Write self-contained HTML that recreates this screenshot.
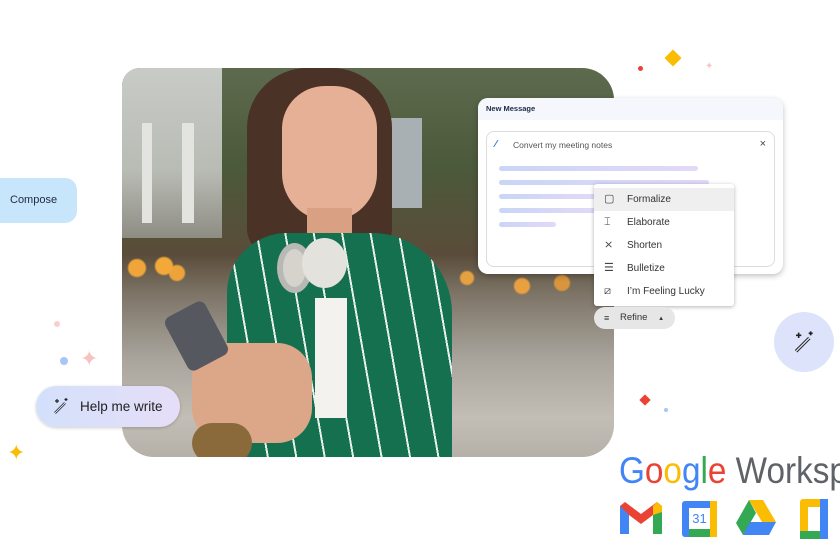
<!DOCTYPE html>
<html><head><meta charset="utf-8"><style>
*{margin:0;padding:0;box-sizing:border-box}
body{width:840px;height:560px;overflow:hidden;background:#fff;font-family:"Liberation Sans",Arial,sans-serif;position:relative}
.abs{position:absolute}
.photo{left:122px;top:68px;width:492px;height:389px;border-radius:18px 32px 32px 32px;overflow:hidden;
background:
radial-gradient(circle at 15px 200px,#f0a53a 0 8px,transparent 10px),
radial-gradient(circle at 42px 198px,#f2a93a 0 8px,transparent 10px),
radial-gradient(circle at 55px 205px,#eda33a 0 7px,transparent 9px),
radial-gradient(circle at 345px 210px,#e5a040 0 6px,transparent 8px),
radial-gradient(circle at 400px 218px,#e9a040 0 7px,transparent 9px),
radial-gradient(circle at 440px 215px,#d8953c 0 7px,transparent 9px),
linear-gradient(180deg,#5e6a4e 0,#4b5a3a 25%,#5a4c3a 48%,#7d7466 58%,#a9a59d 75%,#c2beb6 90%,#b5b1a9 100%);}
.card{left:478px;top:98px;width:305px;height:176px;background:#fff;border-radius:10px;box-shadow:0 2px 6px rgba(0,0,0,.25)}
.menu{left:594px;top:184px;width:140px;height:122px;background:#fff;box-shadow:0 1px 4px rgba(0,0,0,.3);border-radius:3px;font-size:10px;color:#333}
.menu div{height:23px;line-height:23px;padding-left:33px;position:relative}
.menu span{position:absolute;left:10px;top:0;font-size:11px;color:#444}
.line{height:5px;border-radius:3px;background:linear-gradient(90deg,#c9d6f6,#e3d8f8)}
</style></head><body>
<div class="abs photo">
  <div class="abs" style="left:0;top:0;width:100px;height:170px;background:linear-gradient(180deg,#c8cbc6,#b9bcb5 60%,#8e8d84)"></div>
  <div class="abs" style="left:20px;top:55px;width:10px;height:100px;background:#e3e4df"></div>
  <div class="abs" style="left:60px;top:55px;width:12px;height:100px;background:#e3e4df"></div>
  <div class="abs" style="left:255px;top:50px;width:45px;height:90px;background:#a9b0b4"></div>
  <div class="abs" style="left:125px;top:0;width:145px;height:190px;border-radius:60px 60px 30px 30px;background:#4a3226"></div>
  <div class="abs" style="left:160px;top:18px;width:95px;height:135px;border-radius:45px 45px 50px 50px;background:#e6b096"></div>
  <div class="abs" style="left:185px;top:140px;width:45px;height:50px;background:#d9a083"></div>
  <div class="abs" style="left:105px;top:165px;width:225px;height:240px;border-radius:60px 80px 0 0;background:repeating-linear-gradient(80deg,#14704f 0 14px,#e6efe9 14px 16px,#14704f 16px 28px)"></div>
  <div class="abs" style="left:193px;top:230px;width:32px;height:120px;background:#f4f2ee"></div>
  <div class="abs" style="left:155px;top:175px;width:35px;height:50px;border-radius:50%;background:#d5d3cb;border:6px solid #b8b9b5"></div>
  <div class="abs" style="left:180px;top:170px;width:45px;height:50px;border-radius:50%;background:#e4e2dc"></div>
  <div class="abs" style="left:70px;top:275px;width:120px;height:100px;border-radius:35px;background:#dca688"></div>
  <div class="abs" style="left:52px;top:238px;width:45px;height:60px;border-radius:7px;background:#55585f;transform:rotate(-28deg)"></div>
  <div class="abs" style="left:70px;top:355px;width:60px;height:40px;border-radius:20px;background:#8a6a3a"></div>
</div>
<div class="abs card">
  <div style="height:22px;background:#f5f7fc;border-radius:10px 10px 0 0;font-size:7.5px;font-weight:bold;color:#1f2a44;padding:6px 0 0 8px">New Message</div>
  <div class="abs" style="left:8px;top:33px;width:289px;height:136px;border:1px solid #dcdcdc;border-radius:8px">
    <div class="abs" style="left:8px;top:7px;font-size:10px;color:#2a62d8;font-weight:bold">⁄</div>
    <div class="abs" style="left:26px;top:8px;font-size:8.5px;color:#555">Convert my meeting notes</div>
    <div class="abs" style="right:8px;top:6px;font-size:11px;color:#444">×</div>
    <div class="abs line" style="left:12px;top:34px;width:199px"></div>
    <div class="abs line" style="left:12px;top:48px;width:210px"></div>
    <div class="abs line" style="left:12px;top:62px;width:100px"></div>
    <div class="abs line" style="left:12px;top:76px;width:100px"></div>
    <div class="abs line" style="left:12px;top:90px;width:57px"></div>
  </div>
</div>
<div class="abs menu">
  <div style="margin-top:4px;background:#efefef"><span>▢</span>Formalize</div>
  <div><span>⌶</span>Elaborate</div>
  <div><span>⨯</span>Shorten</div>
  <div><span>☰</span>Bulletize</div>
  <div><span>⧄</span>I’m Feeling Lucky</div>
</div>
<div class="abs" style="left:594px;top:307px;width:81px;height:22px;border-radius:11px;background:#e6e6e6;font-size:9.5px;color:#333;line-height:22px;padding-left:26px">Refine <span style="font-size:6px;margin-left:8px">▲</span><span class="abs" style="left:10px;top:0;font-size:9px">≡</span></div>
<div class="abs" style="left:0;top:178px;width:77px;height:45px;background:#c8e6fb;border-radius:0 12px 12px 0;font-size:11px;color:#1f2a44;line-height:45px;padding-left:10px">Compose</div>
<div class="abs" style="left:36px;top:386px;width:144px;height:41px;border-radius:21px;background:linear-gradient(90deg,#d3e0fb,#e6def8);box-shadow:0 1px 3px rgba(0,0,0,.2);font-size:13.5px;color:#1f1f1f;line-height:41px;padding-left:44px">Help me write
  <svg class="abs" style="left:16px;top:11px" width="18" height="18" viewBox="0 0 18 18"><path d="M3 16 L13 6" stroke="#222" stroke-width="2.5"/><path d="M3 16 L13 6" stroke="#d9e0fa" stroke-width="1"/><path d="M5 2v4M3 4h4M14 1v3M12.5 2.5h3" stroke="#222" stroke-width="1.2"/></svg></div>
<div class="abs" style="left:774px;top:312px;width:60px;height:60px;border-radius:50%;background:#dde3fa">
  <svg class="abs" style="left:18px;top:18px" width="24" height="24" viewBox="0 0 18 18"><path d="M3 16 L13 6" stroke="#222" stroke-width="2.5"/><path d="M3 16 L13 6" stroke="#dde3fa" stroke-width="1"/><path d="M5 2v4M3 4h4M14 1v3M12.5 2.5h3" stroke="#222" stroke-width="1.2"/></svg></div>
<div class="abs" style="left:667px;top:52px;width:12px;height:12px;background:#fbbc04;transform:rotate(45deg)"></div>
<div class="abs" style="left:638px;top:66px;width:5px;height:5px;border-radius:50%;background:#ea4335"></div>
<div class="abs" style="left:705px;top:61px;color:#f6c8c4;font-size:10px">✦</div>
<div class="abs" style="left:54px;top:321px;width:6px;height:6px;border-radius:50%;background:#f8cfcb"></div>
<div class="abs" style="left:60px;top:357px;width:8px;height:8px;border-radius:50%;background:#a8c4f8"></div>
<div class="abs" style="left:80px;top:346px;color:#f6c4c0;font-size:22px">✦</div>
<div class="abs" style="left:7px;top:440px;color:#fbbc04;font-size:22px">✦</div>
<div class="abs" style="left:641px;top:396px;width:8px;height:8px;background:#ea4335;transform:rotate(45deg)"></div>
<div class="abs" style="left:664px;top:408px;width:4px;height:4px;border-radius:50%;background:#a8c4f8"></div>
<div class="abs" style="left:619px;top:450px;font-size:37px;white-space:nowrap;transform:scaleX(0.9);transform-origin:left top"><span style="color:#4285f4">G</span><span style="color:#ea4335">o</span><span style="color:#fbbc04">o</span><span style="color:#4285f4">g</span><span style="color:#34a853">l</span><span style="color:#ea4335">e</span> <span style="color:#5f6368">Worksp</span></div>
<svg class="abs" style="left:620px;top:502px" width="42" height="32" viewBox="0 0 42 32"><path d="M0 4v28h9V13l12 9 12-9v19h9V4l-5-4-16 12L5 0z" fill="#ea4335"/><path d="M0 4v28h9V13z" fill="#4285f4"/><path d="M33 13v19h9V4z" fill="#34a853"/><path d="M37 0l5 4v6l-9 3V4z" fill="#fbbc04"/></svg>
<div class="abs" style="left:682px;top:501px;width:35px;height:36px;background:#4285f4;border-radius:3px"><div class="abs" style="left:7px;top:7px;width:21px;height:21px;background:#fff;font-size:13px;color:#4285f4;text-align:center;line-height:21px">31</div><div class="abs" style="left:28px;top:0;width:7px;height:36px;background:#fbbc04"></div><div class="abs" style="left:7px;top:28px;width:21px;height:8px;background:#34a853"></div></div>
<svg class="abs" style="left:736px;top:500px" width="40" height="36" viewBox="0 0 40 36"><path d="M13 0h14l13 22h-14z" fill="#fbbc04"/><path d="M13 0L0 23l7 12 13-22z" fill="#34a853"/><path d="M7 35h26l7-13H14z" fill="#4285f4"/></svg>
<div class="abs" style="left:800px;top:499px;width:28px;height:40px;border-radius:3px;background:#fbbc04"><div class="abs" style="left:8px;top:8px;width:12px;height:24px;background:#fff"></div><div class="abs" style="left:20px;top:0;width:8px;height:40px;background:#4285f4"></div><div class="abs" style="left:0;top:32px;width:20px;height:8px;background:#34a853"></div></div>
</body></html>
